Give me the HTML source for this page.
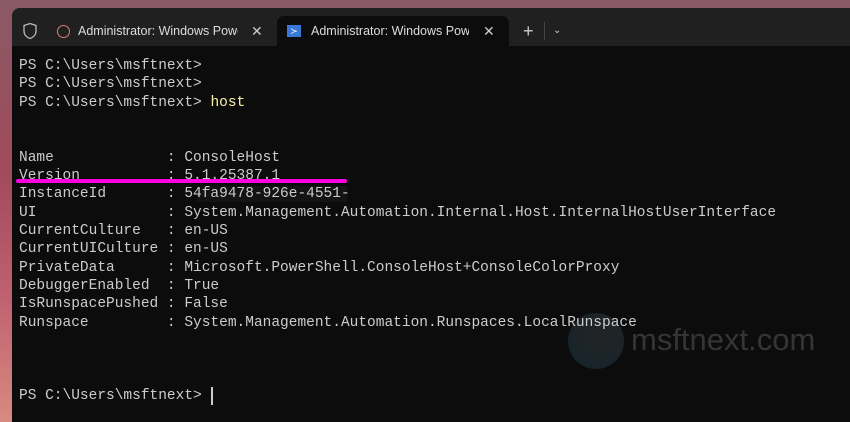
<!DOCTYPE html>
<html><head><style>
body{margin:0;width:850px;height:422px;overflow:hidden;background:linear-gradient(180deg,#8a5a66 0%,#a04a5a 40%,#c06070 70%,#d88a80 100%);position:relative;font-family:"Liberation Sans",sans-serif}
.win{position:absolute;left:12px;top:8px;width:860px;height:414px;background:#0c0c0c;border-radius:8px 0 0 0;overflow:hidden}
.bar{position:absolute;left:0;top:0;right:0;height:38px;background:#202020}
.tab{position:absolute;top:8px;height:30px;color:#ddd;font-size:12.5px;line-height:30px;white-space:nowrap}
.act{left:265px;width:232px;background:#0c0c0c;border-radius:7px 7px 0 0}
pre{position:absolute;left:7px;top:49px;margin:0;font-family:"Liberation Mono",monospace;font-size:14.5px;line-height:18.33px;color:#cccccc}
.y{color:#f9f1a5}
.x{position:absolute;top:8px;line-height:30px;color:#ccc;font-size:14px}
</style></head><body>
<div class="win">
<div class="bar"></div>
<svg style="position:absolute;left:10px;top:14px" width="16" height="18" viewBox="0 0 16 18"><path d="M8 1.5 L14 3.5 V9 C14 13 11 15.5 8 16.5 C5 15.5 2 13 2 9 V3.5 Z" fill="none" stroke="#bbb" stroke-width="1.3"/></svg>
<div style="position:absolute;left:45px;top:17px;width:11px;height:11px;border:1.5px solid #d08080;border-radius:50%"></div>
<div class="tab" style="left:66px;width:160px;overflow:hidden">Administrator: Windows Power</div>
<div class="x" style="left:239px">✕</div>
<div class="tab act"></div>
<div style="position:absolute;left:275px;top:17px;width:14px;height:12px;background:#3a78d8;color:#fff;font-size:9px;line-height:12px;text-align:center">≻</div>
<div class="tab" style="left:299px;width:158px;overflow:hidden">Administrator: Windows Powe</div>
<div class="x" style="left:471px">✕</div>
<div class="tab" style="left:511px;font-size:18px;color:#ccc">+</div>
<div style="position:absolute;left:532px;top:14px;width:1px;height:18px;background:#444"></div>
<div class="tab" style="left:541px;color:#ccc;font-size:10px">&#8964;</div>
<div style="position:absolute;left:185px;top:178px;width:150px;height:16px;background:#141414"></div>
<div style="position:absolute;left:556px;top:305px;width:56px;height:56px;border-radius:50%;background:radial-gradient(circle at 60% 40%,#232323,#18242b 70%,#14212a)"></div>
<div style="position:absolute;left:619px;top:314px;font-size:31px;color:#353535">msftnext.com</div>
<pre>PS C:\Users\msftnext&gt;
PS C:\Users\msftnext&gt;
PS C:\Users\msftnext&gt; <span class="y">host</span>


Name             : ConsoleHost
Version          : 5.1.25387.1
InstanceId       : 54fa9478-926e-4551-
UI               : System.Management.Automation.Internal.Host.InternalHostUserInterface
CurrentCulture   : en-US
CurrentUICulture : en-US
PrivateData      : Microsoft.PowerShell.ConsoleHost+ConsoleColorProxy
DebuggerEnabled  : True
IsRunspacePushed : False
Runspace         : System.Management.Automation.Runspaces.LocalRunspace



PS C:\Users\msftnext&gt; </pre>
<div style="position:absolute;left:199px;top:379px;width:1.5px;height:18px;background:#ccc"></div>
<div style="position:absolute;left:4px;top:171px;width:331px;height:4px;background:#ff00e0;border-radius:2px"></div>
</div>
</body></html>
